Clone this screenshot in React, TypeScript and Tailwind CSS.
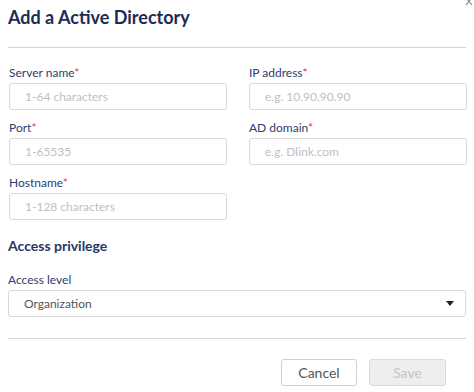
import React from "react";

const Label = ({ text, req = true }: { text: string; req?: boolean }) => (
  <div className="h-[18px] text-[12px] leading-[18px] text-[#2f3b6e]">
    {text}
    {req && <span className="text-[#e5336a]">*</span>}
  </div>
);

const Input = ({ ph }: { ph: string }) => (
  <div className="mt-[1px] flex h-[27px] items-center rounded-[3px] border border-[#d9d9d9] bg-white pl-[15px] text-[12px] text-[#c0c0c0]">
    {ph}
  </div>
);

const Field = ({ label, ph }: { label: string; ph: string }) => (
  <div className="flex flex-col">
    <Label text={label} />
    <Input ph={ph} />
  </div>
);

export default function App() {
  return (
    <div
      className="relative h-[392px] w-[474px] overflow-hidden bg-white px-[8px]"
      style={{ fontFamily: "Lato, 'Open Sans', sans-serif" }}
    >
      <svg className="absolute left-[465px] top-[-3px]" width="8" height="9" viewBox="0 0 8 9">
        <path d="M1 1 L7 8 M7 1 L1 8" stroke="#9a9a9a" strokeWidth="1.2" fill="none" />
      </svg>
      <div className="pt-[5px] text-[18px] font-bold leading-[24px] text-[#1e2a57]">
        Add a Active Directory
      </div>
      <div className="mt-[18px] h-px bg-[#d4d4d4]" />
      <div className="ml-[1px] mt-[16px] grid grid-cols-[218px_218px] gap-x-[22px] gap-y-[9px]">
        <Field label="Server name" ph="1-64 characters" />
        <Field label="IP address" ph="e.g. 10.90.90.90" />
        <Field label="Port" ph="1-65535" />
        <Field label="AD domain" ph="e.g. Dlink.com" />
        <Field label="Hostname" ph="1-128 characters" />
      </div>
      <div className="mt-[16px] h-[20px] text-[14px] font-bold leading-[20px] text-[#2a3566]">
        Access privilege
      </div>
      <div className="mt-[15px]">
        <Label text="Access level" req={false} />
        <div className="mt-[1px] flex h-[27px] items-center justify-between rounded-[3px] border border-[#d9d9d9] pl-[15px] pr-[11px] text-[12px] text-[#555]">
          <span>Organization</span>
          <span className="h-0 w-0 border-x-[4px] border-t-[5px] border-x-transparent border-t-[#222]" />
        </div>
      </div>
      <div className="mt-[21px] h-px bg-[#d4d4d4]" />
      <div className="mt-[20px] flex justify-end gap-[12px] pr-[20px]">
        <button className="h-[27px] w-[76px] rounded-[3px] border border-[#d0d0d0] bg-white text-[14px] text-[#555]">
          Cancel
        </button>
        <button className="h-[27px] w-[77px] rounded-[3px] border border-[#dadada] bg-[#eeeeee] text-[14px] text-[#c4c4c4]">
          Save
        </button>
      </div>
    </div>
  );
}
